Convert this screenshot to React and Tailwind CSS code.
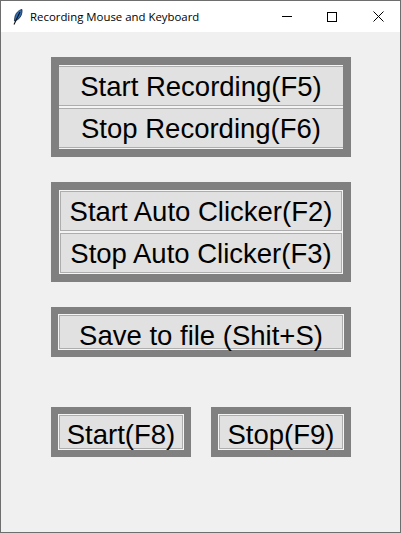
import React from 'react';

function TkButton({ label, plain, shift = '' }) {
  return (
    <div className={`flex-1 min-h-0 bg-[#e1e1e1] border-y border-[#f4f4f4] ${plain ? '' : 'border-x'}`}>
      <div className={`w-full h-full flex items-center justify-center border-y border-[#adadad] ${plain ? '' : 'border-x'}`}>
        <span className={`text-[27.5px] leading-none text-black whitespace-nowrap ${shift}`}>{label}</span>
      </div>
    </div>
  );
}

function Panel({ width, height, pad = 'p-[7px]', children }) {
  return (
    <div className={`${width} ${height} ${pad} bg-[#808080] flex flex-col shrink-0`}>
      {children}
    </div>
  );
}

export default function App() {
  return (
    <div className="w-[401px] h-[533px] flex flex-col bg-[#f0f0f0] border border-[#6e6e6e] overflow-hidden font-['Liberation_Sans',Arial,sans-serif]">
      <div className="h-[31px] bg-white flex items-center shrink-0">
        <svg width="10" height="16" viewBox="0 0 10 16" className="ml-[12px]">
          <path d="M9 0.5 C5.5 1 2.4 4.5 1.8 8.5 L1.4 12 L4.8 10.5 C7.8 8.5 9.4 4.5 9 0.5 Z" fill="#2f6db3" stroke="#10243f" strokeWidth="0.8" />
          <path d="M7 3 L1 15.5" stroke="#111111" strokeWidth="1.1" fill="none" />
        </svg>
        <span className="ml-[7px] text-[11.4px] text-black font-['Open_Sans',sans-serif]">Recording Mouse and Keyboard</span>
        <div className="ml-auto flex items-center">
          <div className="w-[42px] h-[31px] flex items-center justify-center">
            <div className="w-[10px] h-px bg-black" />
          </div>
          <div className="w-[48px] h-[31px] flex items-center justify-center">
            <div className="w-[10px] h-[10px] border border-black" />
          </div>
          <div className="w-[44px] h-[31px] flex items-center justify-center">
            <svg width="11" height="11" viewBox="0 0 11 11">
              <path d="M0.5 0.5 L10.5 10.5 M10.5 0.5 L0.5 10.5" stroke="#000" strokeWidth="1" />
            </svg>
          </div>
        </div>
      </div>

      <div className="pt-[25px] pl-[50px] flex flex-col">
        <Panel width="w-[300px]" height="h-[100px]" pad="p-[8px]">
          <TkButton label="Start Recording(F5)" plain shift="mt-[1px]" />
          <TkButton label="Stop Recording(F6)" plain shift="mt-[2px]" />
        </Panel>
        <div className="mt-[25px]">
          <Panel width="w-[300px]" height="h-[100px]" pad="p-[8px]">
            <TkButton label="Start Auto Clicker(F2)" shift="mt-[2px]" />
            <TkButton label="Stop Auto Clicker(F3)" shift="mt-[1px]" />
          </Panel>
        </div>
        <div className="mt-[25px]">
          <Panel width="w-[300px]" height="h-[50px]">
            <TkButton label="Save to file (Shit+S)" shift="mt-[7px]" />
          </Panel>
        </div>
        <div className="mt-[50px] flex gap-[20px]">
          <Panel width="w-[140px]" height="h-[50px]">
            <TkButton label="Start(F8)" shift="mt-[6px]" />
          </Panel>
          <Panel width="w-[140px]" height="h-[50px]">
            <TkButton label="Stop(F9)" shift="mt-[6px]" />
          </Panel>
        </div>
      </div>
    </div>
  );
}
